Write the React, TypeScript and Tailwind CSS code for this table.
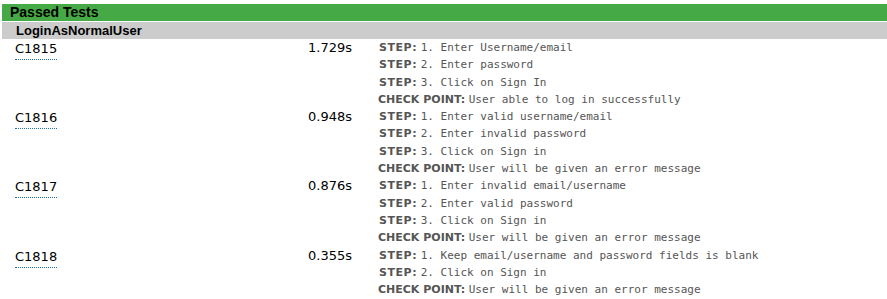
import React from 'react';

type Test = {
  id: string;
  time: string;
  steps: string[];
  check: string;
};

const tests: Test[] = [
  {
    id: 'C1815',
    time: '1.729s',
    steps: ['1. Enter Username/email', '2. Enter password', '3. Click on Sign In'],
    check: 'User able to log in successfully',
  },
  {
    id: 'C1816',
    time: '0.948s',
    steps: ['1. Enter valid username/email', '2. Enter invalid password', '3. Click on Sign in'],
    check: 'User will be given an error message',
  },
  {
    id: 'C1817',
    time: '0.876s',
    steps: ['1. Enter invalid email/username', '2. Enter valid password', '3. Click on Sign in'],
    check: 'User will be given an error message',
  },
  {
    id: 'C1818',
    time: '0.355s',
    steps: ['1. Keep email/username and password fields is blank', '2. Click on Sign in'],
    check: 'User will be given an error message',
  },
];

const sans = "font-['DejaVu_Sans',sans-serif]";
const mono = "font-['DejaVu_Sans_Mono',monospace]";
const head = "font-['Liberation_Sans',Arial,sans-serif]";

export default function App() {
  return (
    <div className={`bg-white w-[887px] h-[299px] pt-[4px] pl-[2px] text-black ${sans}`}>
      {/* Section header */}
      <div className={`bg-[#45aa45] h-[17px] pl-[8px] text-[14px] font-bold leading-[17px] ${head}`}>
        Passed Tests
      </div>
      <div className={`bg-[#cccccc] h-[17px] mt-[1px] pl-[14px] text-[13px] font-bold leading-[17px] ${head}`}>
        LoginAsNormalUser
      </div>

      {/* Test rows */}
      {tests.map((t) => (
        <div key={t.id} className="flex leading-[17.3px]">
          <div className="w-[13px]" />
          <div className="w-[120px]">
            <span className="inline-block text-[13px] leading-[15px] border-b border-dotted border-[#1a6fb0] pb-[3px] mt-[1px]">
              {t.id}
            </span>
          </div>
          <div className="w-[217px] text-right text-[13px]">{t.time}</div>
          <div className="pl-[27px] text-[11px] text-[#555555]">
            {t.steps.map((s) => (
              <div key={s} className="h-[17.3px] whitespace-pre">
                <span className="font-bold tracking-[0.05em]">STEP:</span>{' '}
                <span className={mono}>{s}</span>
              </div>
            ))}
            <div className="h-[17.3px] whitespace-pre -ml-[1px]">
              <span className="font-bold">CHECK POINT:</span>{' '}
              <span className={mono}>{t.check}</span>
            </div>
          </div>
        </div>
      ))}
    </div>
  );
}
